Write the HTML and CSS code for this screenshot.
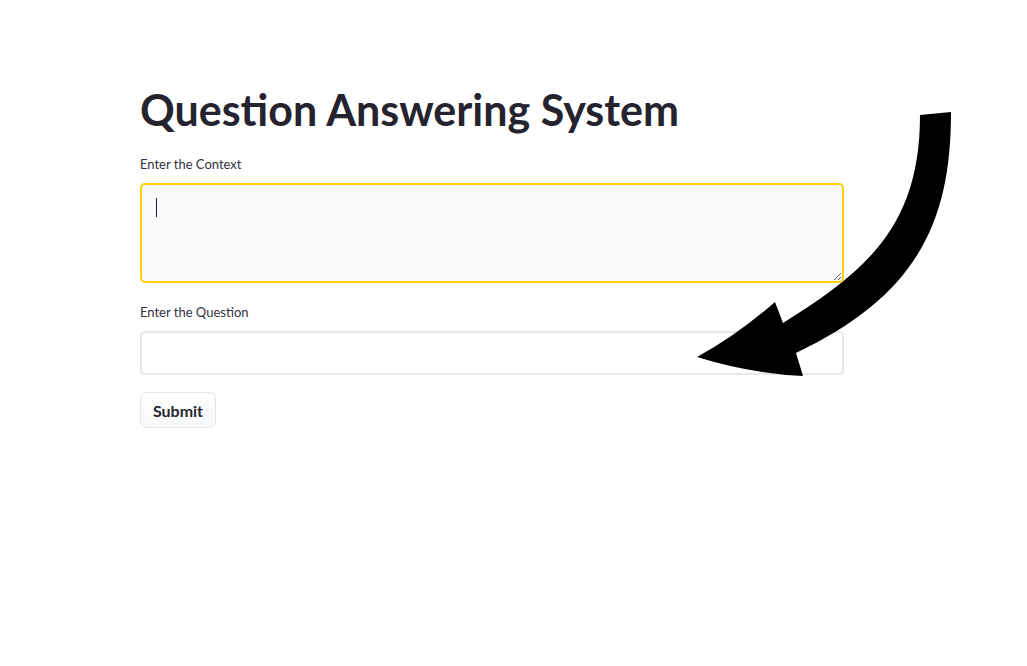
FILE: index.html
```html
<!DOCTYPE html>
<html>
<head>
<meta charset="utf-8">
<link rel="stylesheet" href="styles.css">
</head>
<body>
<main class="main">
  <h1 class="title">Question Answering System</h1>
  <div class="field">
    <label class="label">Enter the Context</label>
    <div class="area-wrap">
      <textarea class="area"></textarea>
      <span class="caret"></span>
    </div>
  </div>
  <div class="field">
    <label class="label">Enter the Question</label>
    <input class="input" type="text">
  </div>
  <button class="btn">Submit</button>
</main>
<svg class="arrow" width="1027" height="666" viewBox="0 0 1027 666">
  <path d="M920 115 L951 112
           C951 222 917.5 295 796 353
           L803 376
           Q750 373.5 697 357
           Q736 336 775 302
           L783 323
           C868 270 920 225 920 115 Z" fill="#000"/>
</svg>
</body>
</html>
```
FILE: styles.css
```css
html, body {
  margin: 0;
  padding: 0;
  background: #fff;
}
body {
  font-family: Lato, "Liberation Sans", sans-serif;
  color: rgb(49, 51, 63);
  width: 1027px;
  height: 666px;
  overflow: hidden;
  position: relative;
}
.main {
  width: 704px;
  padding: 84px 0 0 140px;
  display: flex;
  flex-direction: column;
}
.title {
  margin: 0;
  font-size: 43px;
  line-height: 52px;
  font-weight: 700;
  color: #24232e;
}
.field {
  display: flex;
  flex-direction: column;
}
.field:first-of-type {
  margin-top: 18px;
}
.label {
  font-size: 13px;
  line-height: 20px;
  margin-bottom: 9px;
}
.area-wrap {
  position: relative;
}
.area {
  display: block;
  box-sizing: border-box;
  width: 704px;
  height: 100px;
  margin: 0;
  border: 2px solid #ffd200;
  border-radius: 5px;
  background: #f8f9fb;
  outline: none;
  font: inherit;
}
.caret {
  position: absolute;
  left: 16px;
  top: 15px;
  width: 1px;
  height: 19px;
  background: #1e1e28;
}
.field + .field {
  margin-top: 19px;
}
.input {
  box-sizing: border-box;
  width: 704px;
  height: 44px;
  margin: 0;
  border: 2px solid #e7e7eb;
  border-radius: 5px;
  background: #fff;
  outline: none;
  font: inherit;
}
.btn {
  align-self: flex-start;
  margin-top: 17px;
  box-sizing: border-box;
  height: 36px;
  width: 76px;
  padding: 0;
  border: 1px solid #e3e3e8;
  border-radius: 7px;
  background: linear-gradient(#fff, #f6f7f9);
  font-family: inherit;
  font-size: 16px;
  font-weight: 700;
  color: #262730;
}
.arrow {
  position: absolute;
  left: 0;
  top: 0;
}
```
